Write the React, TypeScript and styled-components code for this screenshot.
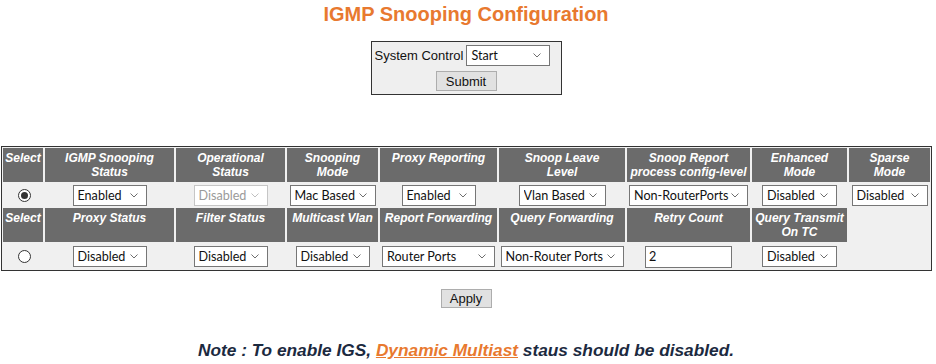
import React from 'react';
import styled, { createGlobalStyle, css } from 'styled-components';

const GlobalStyle = createGlobalStyle`
  body {
    margin: 0;
    background: #ffffff;
    font-family: 'Liberation Sans', Arial, sans-serif;
  }
`;

const Page = styled.div`
  width: 932px;
  padding-top: 2px;
  display: flex;
  flex-direction: column;
  align-items: center;
`;

const Title = styled.h1`
  margin: 0;
  font-size: 20px;
  line-height: 24px;
  font-weight: bold;
  color: #e8792f;
`;

const ControlBox = styled.div`
  margin-top: 15px;
  width: 191px;
  box-sizing: border-box;
  border: 1px solid #333333;
  background: #efefef;
  padding: 3px;
  display: flex;
  flex-direction: column;
  align-items: center;
  gap: 5px;
`;

const ControlRow = styled.div`
  align-self: flex-start;
  display: flex;
  align-items: center;
  gap: 3px;
`;

const Label = styled.span`
  font-size: 13px;
  color: #111111;
`;

const Button = styled.button<{ $w: number; $h: number; $top?: number }>`
  width: ${(p) => p.$w}px;
  height: ${(p) => p.$h}px;
  margin-top: ${(p) => p.$top ?? 0}px;
  padding: 0;
  border: 1px solid #adadad;
  background: #e1e1e1;
  font-family: 'Liberation Sans', Arial, sans-serif;
  font-size: 13px;
  color: #111111;
  line-height: 1;
`;

const ConfigGrid = styled.div`
  margin-top: 51px;
  align-self: flex-start;
  margin-left: 1px;
  border: 1px solid #333333;
  background: #f0f0f0;
  padding: 1px;
  display: grid;
  grid-template-columns: 40px 129px 109px 91px 117px 126px 123px 95px 81px;
  grid-template-rows: 34px 22px 34px 25px;
  gap: 2px;
`;

const HeadCell = styled.div<{ $empty?: boolean }>`
  background: ${(p) => (p.$empty ? 'transparent' : '#6b6b6b')};
  color: #ffffff;
  font-family: 'Liberation Sans', Arial, sans-serif;
  font-size: 12px;
  font-weight: bold;
  font-style: italic;
  line-height: 14px;
  text-align: center;
  white-space: nowrap;
  padding-top: 3px;
  box-sizing: border-box;
`;

const DataCell = styled.div`
  display: flex;
  align-items: center;
  justify-content: center;
`;

const Radio = styled.span<{ $on?: boolean }>`
  width: 13px;
  height: 13px;
  box-sizing: border-box;
  border-radius: 50%;
  border: 1px solid #333333;
  background: #ffffff;
  display: flex;
  align-items: center;
  justify-content: center;
  margin-left: 2px;
  &::after {
    content: '';
    width: 7px;
    height: 7px;
    border-radius: 50%;
    background: ${(p) => (p.$on ? '#333333' : 'transparent')};
  }
`;

const SelectWrap = styled.span<{ $w: number }>`
  position: relative;
  display: inline-block;
  width: ${(p) => p.$w}px;
  height: 21px;
`;

const NativeSelect = styled.select`
  appearance: none;
  width: 100%;
  height: 100%;
  box-sizing: border-box;
  margin: 0;
  padding: 0 16px 0 4px;
  border: 1px solid #767676;
  border-radius: 0;
  background: #ffffff;
  font-family: Lato, 'Noto Sans', sans-serif;
  font-size: 12.6px;
  color: #111111;
  ${(p) =>
    p.disabled &&
    css`
      border-color: #c6c6c6;
      color: #9a9a9a;
      opacity: 1;
    `}
`;

const Chevron = styled.svg<{ $dim?: boolean }>`
  position: absolute;
  right: 9px;
  top: 8px;
  pointer-events: none;
  stroke: ${(p) => (p.$dim ? '#c0c0c0' : '#6e6e6e')};
`;

const TextInput = styled.input`
  width: 87px;
  height: 22px;
  box-sizing: border-box;
  margin: 0;
  padding: 0 3px;
  border: 1px solid #767676;
  background: #ffffff;
  font-family: Lato, 'Noto Sans', sans-serif;
  font-size: 12.6px;
  color: #111111;
`;

const Note = styled.p`
  margin: 32px 0 0;
  font-size: 17.3px;
  line-height: 20px;
  font-weight: bold;
  font-style: italic;
  color: #1c2a3f;
`;

const NoteLink = styled.a`
  color: #e8792f;
  text-decoration: underline;
`;

type SelectProps = { w: number; value: string; options: string[]; disabled?: boolean };

const Select = ({ w, value, options, disabled }: SelectProps): JSX.Element => (
  <SelectWrap $w={w}>
    <NativeSelect defaultValue={value} disabled={disabled}>
      {options.map((o) => (
        <option key={o}>{o}</option>
      ))}
    </NativeSelect>
    <Chevron $dim={disabled} width="8" height="5" viewBox="0 0 8 5" fill="none" strokeWidth="1">
      <polyline points="0.5,0.5 4,4 7.5,0.5" />
    </Chevron>
  </SelectWrap>
);

const EN = ['Enabled', 'Disabled'];
const DIS = ['Disabled', 'Enabled'];

const headRow1 = [
  ['Select'],
  ['IGMP Snooping', 'Status'],
  ['Operational', 'Status'],
  ['Snooping', 'Mode'],
  ['Proxy Reporting'],
  ['Snoop Leave', 'Level'],
  ['Snoop Report', 'process config-level'],
  ['Enhanced', 'Mode'],
  ['Sparse', 'Mode'],
];

const headRow2 = [
  ['Select'],
  ['Proxy Status'],
  ['Filter Status'],
  ['Multicast Vlan'],
  ['Report Forwarding'],
  ['Query Forwarding'],
  ['Retry Count'],
  ['Query Transmit', 'On TC'],
  [],
];

const Head = ({ lines }: { lines: string[] }): JSX.Element => (
  <HeadCell $empty={lines.length === 0}>
    {lines.map((l, i) => (
      <div key={i}>{l}</div>
    ))}
  </HeadCell>
);

const App = (): JSX.Element => {
  return (
    <Page>
      <GlobalStyle />
      <Title>IGMP Snooping Configuration</Title>
      <ControlBox>
        <ControlRow>
          <Label>System Control</Label>
          <Select w={84} value="Start" options={['Start', 'Shutdown']} />
        </ControlRow>
        <Button $w={61} $h={20}>Submit</Button>
      </ControlBox>

      <ConfigGrid>
        {headRow1.map((h, i) => (
          <Head key={'a' + i} lines={h} />
        ))}
        <DataCell><Radio $on /></DataCell>
        <DataCell><Select w={74} value="Enabled" options={EN} /></DataCell>
        <DataCell><Select w={74} value="Disabled" options={DIS} disabled /></DataCell>
        <DataCell><Select w={86} value="Mac Based" options={['Mac Based', 'IP Based']} /></DataCell>
        <DataCell><Select w={74} value="Enabled" options={EN} /></DataCell>
        <DataCell><Select w={87} value="Vlan Based" options={['Vlan Based', 'Port Based']} /></DataCell>
        <DataCell><Select w={119} value="Non-RouterPorts" options={['Non-RouterPorts', 'AllPorts']} /></DataCell>
        <DataCell><Select w={75} value="Disabled" options={DIS} /></DataCell>
        <DataCell><Select w={76} value="Disabled" options={DIS} /></DataCell>

        {headRow2.map((h, i) => (
          <Head key={'b' + i} lines={h} />
        ))}
        <DataCell><Radio /></DataCell>
        <DataCell><Select w={74} value="Disabled" options={DIS} /></DataCell>
        <DataCell><Select w={74} value="Disabled" options={DIS} /></DataCell>
        <DataCell><Select w={74} value="Disabled" options={DIS} /></DataCell>
        <DataCell><Select w={113} value="Router Ports" options={['Router Ports', 'All Ports']} /></DataCell>
        <DataCell><Select w={123} value="Non-Router Ports" options={['Non-Router Ports', 'All Ports']} /></DataCell>
        <DataCell><TextInput defaultValue="2" /></DataCell>
        <DataCell><Select w={75} value="Disabled" options={DIS} /></DataCell>
        <DataCell />
      </ConfigGrid>

      <Button $w={51} $h={19} $top={18}>Apply</Button>

      <Note>
        Note : To enable IGS, <NoteLink href="#">Dynamic Multiast</NoteLink> staus should be disabled.
      </Note>
    </Page>
  );
};

export default App;
